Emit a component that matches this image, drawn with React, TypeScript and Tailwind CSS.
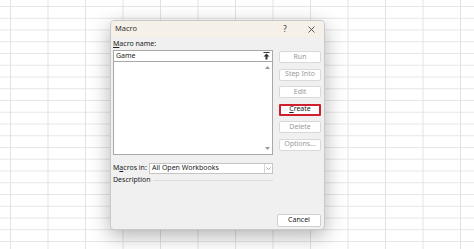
import React from "react";

const btn =
  "h-[12px] w-[42px] flex items-center justify-center rounded-[2px] bg-white border border-[#d9d9d9] text-[7px] text-[#9a9a9a]";

function Btn({ label }: { label: string }) {
  return <div className={btn}>{label}</div>;
}

export default function App() {
  return (
    <div
      className="relative w-[474px] h-[249px] overflow-hidden bg-white bg-[linear-gradient(to_right,#e2e2e2_1px,transparent_1px),linear-gradient(to_bottom,#e6e6e6_1px,transparent_1px)] bg-[size:37.5px_11.75px] bg-[position:10px_6px]"
      style={{ fontFamily: '"Noto Sans", "Liberation Sans", sans-serif' }}
    >
      {/* dialog window */}
      <div className="absolute left-[110px] top-[20px] w-[215px] h-[210px] flex flex-col rounded-[4px] border border-[#c9c9c9] bg-[#f0f0f0] shadow-[0_6px_20px_rgba(0,0,0,0.3)] overflow-hidden">
        {/* title bar */}
        <div className="h-[16px] flex items-center bg-[#f6f1e8] pl-[4px] text-[7.5px] text-[#333]">
          <span className="flex-1">Macro</span>
          <span className="w-[10px] text-center text-[8px]">?</span>
          <div className="w-[10px] ml-[16px] mr-[8px] flex items-center justify-center">
            <svg width="7" height="7" viewBox="0 0 7 7">
              <path d="M0.5 0.5 L6.5 6.5 M6.5 0.5 L0.5 6.5" stroke="#333" strokeWidth="0.8" />
            </svg>
          </div>
        </div>

        <div className="flex-1 flex flex-col px-[2px] text-[7px] text-[#222]">
          <div className="flex">
            {/* left column */}
            <div className="w-[160px] flex flex-col">
              <div className="h-[13px] flex items-end pb-[1px]">
                <span>
                  <span className="underline">M</span>acro name:
                </span>
              </div>
              <div className="h-[12px] flex items-center bg-white border border-[#a8a8a8] pl-[2px]">
                <span className="flex-1">Game</span>
                <svg width="7" height="8" viewBox="0 0 7 8" className="mr-[2px]">
                  <rect x="0.5" y="0" width="6" height="1" fill="#333" />
                  <path d="M3.5 1.5 L6.5 4.5 H4.5 V7.5 H2.5 V4.5 H0.5 Z" fill="#333" />
                </svg>
              </div>
              <div className="h-[93px] flex bg-white border border-[#a8a8a8] border-t-0">
                <div className="flex-1" />
                <div className="w-[9px] flex flex-col items-center justify-between py-[4px]">
                  <svg width="5" height="3" viewBox="0 0 5 3">
                    <path d="M2.5 0 L5 3 H0 Z" fill="#9a9a9a" />
                  </svg>
                  <svg width="5" height="3" viewBox="0 0 5 3">
                    <path d="M0 0 H5 L2.5 3 Z" fill="#9a9a9a" />
                  </svg>
                </div>
              </div>
            </div>

            {/* buttons */}
            <div className="ml-[6px] mt-[14px] flex flex-col gap-[5.5px]">
              <Btn label="Run" />
              <Btn label="Step Into" />
              <Btn label="Edit" />
              <div className="h-[12px] w-[42px] flex items-center justify-center rounded-[1px] bg-white border-2 border-[#d0202e] text-[7px] text-[#222]">
                <span>
                  <span className="underline">C</span>reate
                </span>
              </div>
              <Btn label="Delete" />
              <Btn label="Options..." />
            </div>
          </div>

          {/* macros in */}
          <div className="mt-[8px] flex items-center w-[160px]">
            <span className="w-[36px]">
              M<span className="underline">a</span>cros in:
            </span>
            <div className="flex-1 h-[11px] flex items-center bg-white border border-[#c4c4c4] pl-[2px]">
              <span className="flex-1">All Open Workbooks</span>
              <div className="w-[8px] h-full flex items-center justify-center border-l border-[#d6d6d6]">
                <svg width="5" height="3" viewBox="0 0 5 3">
                  <path d="M0.3 0.3 L2.5 2.6 L4.7 0.3" fill="none" stroke="#888" strokeWidth="0.7" />
                </svg>
              </div>
            </div>
          </div>

          <div className="mt-[1px] flex items-center w-[160px]">
            <span>Description</span>
            <div className="flex-1 ml-[2px] h-px bg-[#dcdcdc]" />
          </div>

          <div className="flex-1" />
          <div className="flex justify-end pr-[1px] pb-[2px]">
            <div className="h-[13px] w-[44px] flex items-center justify-center rounded-[2px] bg-white border border-[#cfcfcf] text-[7px] text-[#222]">
              Cancel
            </div>
          </div>
        </div>
      </div>
    </div>
  );
}
